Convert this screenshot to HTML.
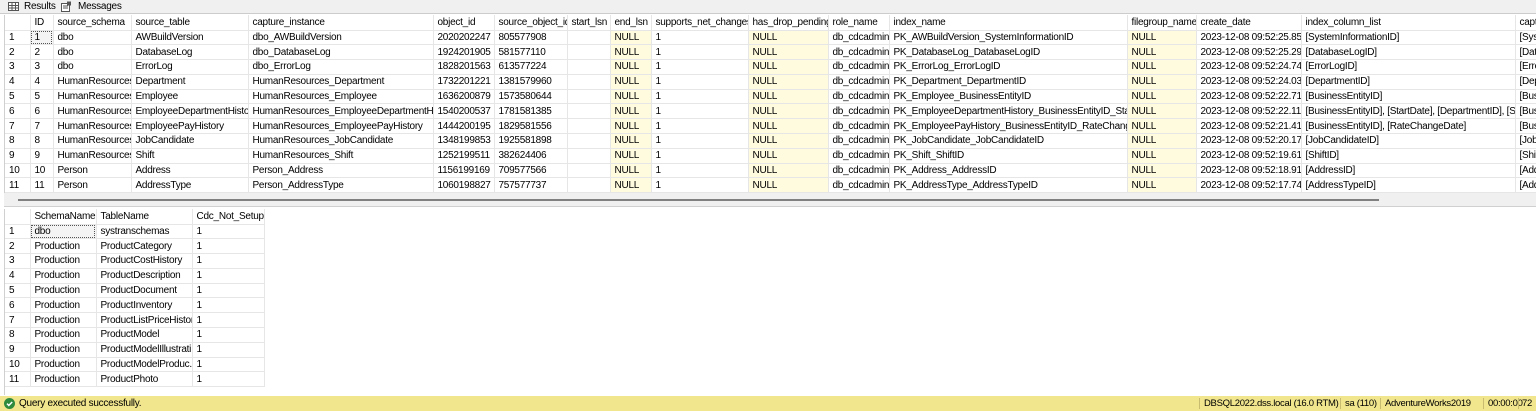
<!DOCTYPE html>
<html><head><style>
*{margin:0;padding:0;box-sizing:border-box}
body{width:1536px;height:411px;overflow:hidden;background:#fff;font-family:"Liberation Sans",sans-serif;font-size:10px;color:#000;position:relative;letter-spacing:-0.25px}
.tabs{position:absolute;left:0;top:0;width:1536px;height:14px;background:#f0f0f0;border-bottom:1px solid #ccc}
.tab{position:absolute;top:0;height:14px;line-height:13px;font-size:10px}
.pane{position:absolute;left:4px;background:#fff;overflow:hidden;border-left:1px solid #d0d0d0}
table{border-collapse:collapse;table-layout:fixed;position:absolute;left:0;top:0}
td{height:14.8px;border-right:1px solid #e6e6e6;border-bottom:1px solid #e6e6e6;white-space:nowrap;overflow:hidden;padding-left:4px;line-height:13px;font-size:10px}
tr.h td{height:15px}
td.n{background:#fffbdf}
.sel{outline:1px dotted #555;outline-offset:-2px;background:#f4f4f4}
.status{position:absolute;left:0;top:396px;width:1536px;height:15px;background:#f1e68e;line-height:15px;font-size:10px}
.status span{position:absolute;top:0;white-space:nowrap}
.status span.r{font-size:9.5px;letter-spacing:-0.3px}
.sep{position:absolute;top:2px;width:1px;height:11px;background:#c8bc70}
</style></head><body>
<div class="tabs">
<svg style="position:absolute;left:8px;top:2px" width="11" height="9"><rect x=".5" y=".5" width="10" height="8" fill="#fff" stroke="#555"/><path d="M.5 3.5h10M.5 6h10M4 .5v8M7.5 .5v8" stroke="#555"/></svg>
<span class="tab" style="left:24px">Results</span>
<svg style="position:absolute;left:61px;top:1px" width="11" height="11"><rect x=".5" y="2.5" width="8" height="8" fill="#fff" stroke="#555"/><path d="M2 5h5M2 7h5" stroke="#555"/><rect x="6" y=".5" width="4" height="4" fill="#555"/></svg>
<span class="tab" style="left:78px">Messages</span>
</div>
<div class="pane" style="top:15px;width:1532px;height:178px">
<table style="width:1600px">
<colgroup><col style="width:25px"><col style="width:23px"><col style="width:78px"><col style="width:117px"><col style="width:185px"><col style="width:61px"><col style="width:73px"><col style="width:43px"><col style="width:41px"><col style="width:97px"><col style="width:80px"><col style="width:61px"><col style="width:238px"><col style="width:69px"><col style="width:105px"><col style="width:214px"><col style="width:90px"></colgroup>
<tr class="h"><td></td><td>ID</td><td>source_schema</td><td>source_table</td><td>capture_instance</td><td>object_id</td><td>source_object_id</td><td>start_lsn</td><td>end_lsn</td><td>supports_net_changes</td><td>has_drop_pending</td><td>role_name</td><td>index_name</td><td>filegroup_name</td><td>create_date</td><td>index_column_list</td><td>captu</td></tr>
<tr><td>1</td><td class="sel">1</td><td>dbo</td><td>AWBuildVersion</td><td>dbo_AWBuildVersion</td><td>2020202247</td><td>805577908</td><td></td><td class="n">NULL</td><td>1</td><td class="n">NULL</td><td>db_cdcadmin</td><td>PK_AWBuildVersion_SystemInformationID</td><td class="n">NULL</td><td>2023-12-08 09:52:25.857</td><td>[SystemInformationID]</td><td>[Sys</td></tr>
<tr><td>2</td><td>2</td><td>dbo</td><td>DatabaseLog</td><td>dbo_DatabaseLog</td><td>1924201905</td><td>581577110</td><td></td><td class="n">NULL</td><td>1</td><td class="n">NULL</td><td>db_cdcadmin</td><td>PK_DatabaseLog_DatabaseLogID</td><td class="n">NULL</td><td>2023-12-08 09:52:25.290</td><td>[DatabaseLogID]</td><td>[Dat</td></tr>
<tr><td>3</td><td>3</td><td>dbo</td><td>ErrorLog</td><td>dbo_ErrorLog</td><td>1828201563</td><td>613577224</td><td></td><td class="n">NULL</td><td>1</td><td class="n">NULL</td><td>db_cdcadmin</td><td>PK_ErrorLog_ErrorLogID</td><td class="n">NULL</td><td>2023-12-08 09:52:24.743</td><td>[ErrorLogID]</td><td>[Erro</td></tr>
<tr><td>4</td><td>4</td><td>HumanResources</td><td>Department</td><td>HumanResources_Department</td><td>1732201221</td><td>1381579960</td><td></td><td class="n">NULL</td><td>1</td><td class="n">NULL</td><td>db_cdcadmin</td><td>PK_Department_DepartmentID</td><td class="n">NULL</td><td>2023-12-08 09:52:24.030</td><td>[DepartmentID]</td><td>[Dep</td></tr>
<tr><td>5</td><td>5</td><td>HumanResources</td><td>Employee</td><td>HumanResources_Employee</td><td>1636200879</td><td>1573580644</td><td></td><td class="n">NULL</td><td>1</td><td class="n">NULL</td><td>db_cdcadmin</td><td>PK_Employee_BusinessEntityID</td><td class="n">NULL</td><td>2023-12-08 09:52:22.717</td><td>[BusinessEntityID]</td><td>[Bus</td></tr>
<tr><td>6</td><td>6</td><td>HumanResources</td><td>EmployeeDepartmentHistory</td><td>HumanResources_EmployeeDepartmentHistory</td><td>1540200537</td><td>1781581385</td><td></td><td class="n">NULL</td><td>1</td><td class="n">NULL</td><td>db_cdcadmin</td><td>PK_EmployeeDepartmentHistory_BusinessEntityID_StartDa...</td><td class="n">NULL</td><td>2023-12-08 09:52:22.117</td><td>[BusinessEntityID], [StartDate], [DepartmentID], [Shift...</td><td>[Bus</td></tr>
<tr><td>7</td><td>7</td><td>HumanResources</td><td>EmployeePayHistory</td><td>HumanResources_EmployeePayHistory</td><td>1444200195</td><td>1829581556</td><td></td><td class="n">NULL</td><td>1</td><td class="n">NULL</td><td>db_cdcadmin</td><td>PK_EmployeePayHistory_BusinessEntityID_RateChangeD...</td><td class="n">NULL</td><td>2023-12-08 09:52:21.417</td><td>[BusinessEntityID], [RateChangeDate]</td><td>[Bus</td></tr>
<tr><td>8</td><td>8</td><td>HumanResources</td><td>JobCandidate</td><td>HumanResources_JobCandidate</td><td>1348199853</td><td>1925581898</td><td></td><td class="n">NULL</td><td>1</td><td class="n">NULL</td><td>db_cdcadmin</td><td>PK_JobCandidate_JobCandidateID</td><td class="n">NULL</td><td>2023-12-08 09:52:20.173</td><td>[JobCandidateID]</td><td>[Job</td></tr>
<tr><td>9</td><td>9</td><td>HumanResources</td><td>Shift</td><td>HumanResources_Shift</td><td>1252199511</td><td>382624406</td><td></td><td class="n">NULL</td><td>1</td><td class="n">NULL</td><td>db_cdcadmin</td><td>PK_Shift_ShiftID</td><td class="n">NULL</td><td>2023-12-08 09:52:19.617</td><td>[ShiftID]</td><td>[Shif</td></tr>
<tr><td>10</td><td>10</td><td>Person</td><td>Address</td><td>Person_Address</td><td>1156199169</td><td>709577566</td><td></td><td class="n">NULL</td><td>1</td><td class="n">NULL</td><td>db_cdcadmin</td><td>PK_Address_AddressID</td><td class="n">NULL</td><td>2023-12-08 09:52:18.910</td><td>[AddressID]</td><td>[Add</td></tr>
<tr><td>11</td><td>11</td><td>Person</td><td>AddressType</td><td>Person_AddressType</td><td>1060198827</td><td>757577737</td><td></td><td class="n">NULL</td><td>1</td><td class="n">NULL</td><td>db_cdcadmin</td><td>PK_AddressType_AddressTypeID</td><td class="n">NULL</td><td>2023-12-08 09:52:17.740</td><td>[AddressTypeID]</td><td>[Add</td></tr>
</table></div>
<div style="position:absolute;left:4px;top:193px;width:1532px;height:14px;background:#f0f0f0;border-bottom:1px solid #d0d0d0"></div>
<div style="position:absolute;left:18px;top:199px;width:1361px;height:2px;background:#808080"></div>
<div class="pane" style="top:209px;width:1532px;height:186px">
<table style="width:259px">
<colgroup><col style="width:25px"><col style="width:66px"><col style="width:96px"><col style="width:72px"></colgroup>
<tr class="h"><td></td><td>SchemaName</td><td>TableName</td><td>Cdc_Not_Setup</td></tr>
<tr><td>1</td><td class="sel">dbo</td><td>systranschemas</td><td>1</td></tr>
<tr><td>2</td><td>Production</td><td>ProductCategory</td><td>1</td></tr>
<tr><td>3</td><td>Production</td><td>ProductCostHistory</td><td>1</td></tr>
<tr><td>4</td><td>Production</td><td>ProductDescription</td><td>1</td></tr>
<tr><td>5</td><td>Production</td><td>ProductDocument</td><td>1</td></tr>
<tr><td>6</td><td>Production</td><td>ProductInventory</td><td>1</td></tr>
<tr><td>7</td><td>Production</td><td>ProductListPriceHistory</td><td>1</td></tr>
<tr><td>8</td><td>Production</td><td>ProductModel</td><td>1</td></tr>
<tr><td>9</td><td>Production</td><td>ProductModelIllustrati...</td><td>1</td></tr>
<tr><td>10</td><td>Production</td><td>ProductModelProduc...</td><td>1</td></tr>
<tr><td>11</td><td>Production</td><td>ProductPhoto</td><td>1</td></tr>
</table></div>
<div class="status">
<svg style="position:absolute;left:4px;top:2px" width="11" height="11"><circle cx="5.5" cy="5.5" r="5.5" fill="#2e8b3e"/><path d="M3 5.6l1.8 1.8L8.2 4" stroke="#fff" stroke-width="1.5" fill="none"/></svg>
<span style="left:19px">Query executed successfully.</span>
<div class="sep" style="left:1199px"></div><span class="r" style="left:1204px">DBSQL2022.dss.local (16.0 RTM)</span>
<div class="sep" style="left:1340px"></div><span class="r" style="left:1345px">sa (110)</span>
<div class="sep" style="left:1380px"></div><span class="r" style="left:1385px">AdventureWorks2019</span>
<div class="sep" style="left:1483px"></div><span class="r" style="left:1488px">00:00:00</span>
<div class="sep" style="left:1518px"></div><span class="r" style="left:1522px">72</span>
</div>
</body></html>
